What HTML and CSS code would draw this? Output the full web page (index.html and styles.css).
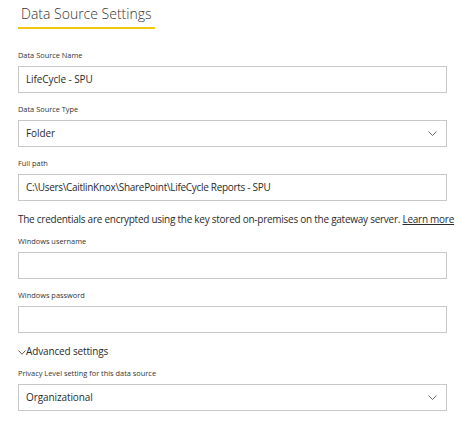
FILE: index.html
```html
<!DOCTYPE html>
<html lang="en">
<head>
<meta charset="utf-8">
<title>Data Source Settings</title>
<link rel="stylesheet" href="styles.css">
</head>
<body>
<main class="page">
  <header class="heading">
    <h1 class="title">Data Source Settings</h1>
  </header>

  <div class="field">
    <div class="label">Data Source Name</div>
    <div class="box">LifeCycle - SPU</div>
  </div>

  <div class="field">
    <div class="label">Data Source Type</div>
    <div class="box select">
      <span>Folder</span>
      <svg class="chev" width="9" height="5" viewBox="0 0 9 5"><path d="M0.5 0.5 L4.5 4.5 L8.5 0.5" fill="none" stroke="#666" stroke-width="1"/></svg>
    </div>
  </div>

  <div class="field">
    <div class="label">Full path</div>
    <div class="box path">C:\Users\CaitlinKnox\SharePoint\LifeCycle Reports - SPU</div>
  </div>

  <p class="note">The credentials are encrypted using the key stored on-premises on the gateway server. <a class="link" href="#">Learn more</a></p>

  <div class="field">
    <div class="label">Windows username</div>
    <div class="box"></div>
  </div>

  <div class="field">
    <div class="label">Windows password</div>
    <div class="box"></div>
  </div>

  <div class="advanced">
    <svg class="adv-chev" width="8" height="5" viewBox="0 0 8 5"><path d="M0.5 0.5 L4 4.2 L7.5 0.5" fill="none" stroke="#444" stroke-width="0.9"/></svg>
    <span>Advanced settings</span>
  </div>

  <div class="field">
    <div class="label">Privacy Level setting for this data source</div>
    <div class="box select">
      <span>Organizational</span>
      <svg class="chev" width="9" height="5" viewBox="0 0 9 5"><path d="M0.5 0.5 L4.5 4.5 L8.5 0.5" fill="none" stroke="#666" stroke-width="1"/></svg>
    </div>
  </div>
</main>
</body>
</html>
```

FILE: styles.css
```css
* { box-sizing: border-box; }

html, body {
  margin: 0;
  padding: 0;
  background: #ffffff;
}

body {
  font-family: "Open Sans", "Segoe UI", Arial, sans-serif;
  color: #333333;
  width: 474px;
  height: 432px;
  overflow: hidden;
}

.page {
  padding-left: 18px;
  width: 447px;
  display: flex;
  flex-direction: column;
}

.heading {
  display: flex;
  margin-bottom: 20px;
}

.title {
  margin: 0;
  padding: 4px 3px 4px 3px;
  font-size: 14px;
  font-weight: 300;
  line-height: 19px;
  color: #333;
  border-bottom: 2px solid #f2c811;
}

.field {
  display: flex;
  flex-direction: column;
  margin-bottom: 10px;
}

.label {
  font-size: 7.4px;
  line-height: 12px;
  color: #333;
  margin-bottom: 5px;
}

.box {
  height: 27px;
  border: 1px solid #c8c8c8;
  background: #fff;
  padding: 0 7px;
  font-size: 10px;
  line-height: 25px;
  letter-spacing: -0.1px;
  color: #2b2b2b;
  white-space: nowrap;
}

.path {
  letter-spacing: -0.3px;
}

.select {
  display: flex;
  align-items: center;
  justify-content: space-between;
  padding-right: 9px;
}

.chev { display: block; }

.note {
  margin: 0 0 8px 0;
  font-size: 10px;
  line-height: 16px;
  letter-spacing: -0.26px;
  white-space: nowrap;
  color: #2b2b2b;
}

.link {
  color: #2b2b2b;
  text-decoration: underline;
}

.advanced {
  display: flex;
  align-items: center;
  height: 16px;
  font-size: 10px;
  line-height: 16px;
  letter-spacing: -0.15px;
  color: #2b2b2b;
  margin-bottom: 8px;
}

.adv-chev {
  display: block;
  margin-top: 3px;
}
```
